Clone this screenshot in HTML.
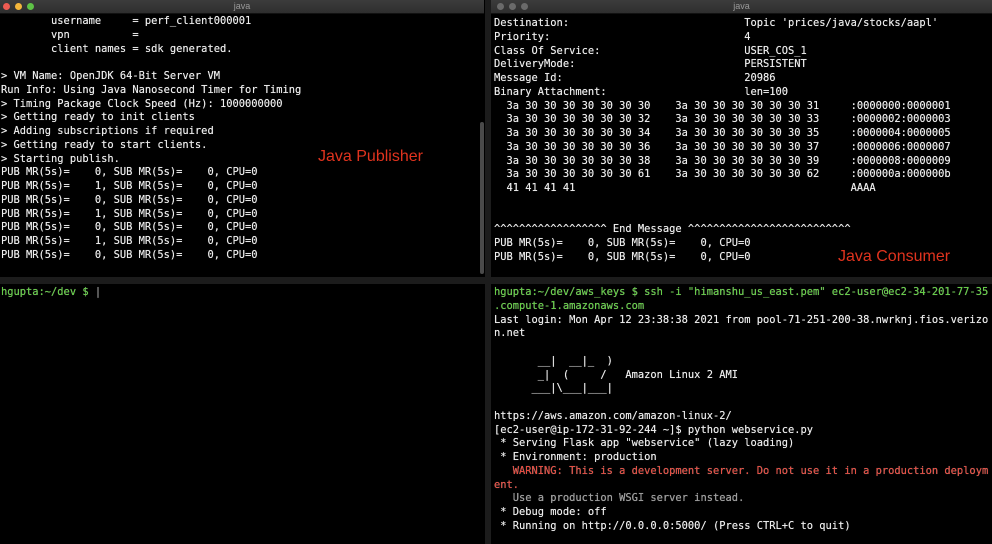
<!DOCTYPE html>
<html><head><style>
body{margin:0;width:992px;height:544px;background:#000;overflow:hidden;position:relative;font-family:"Liberation Mono",monospace}
.tb{position:absolute;top:0;height:13px;background:linear-gradient(#3c3c3c,#2e2e2e);border-bottom:1px solid #111;color:#9a9a9a;font:9px "Liberation Sans",sans-serif;text-align:center;line-height:13px}
.d{position:absolute;top:3px;width:7px;height:7px;border-radius:50%}
pre{position:absolute;margin:0;font-size:10.4px;line-height:13.75px;color:#ececec;white-space:pre;text-shadow:0 0 0.4px #ddd}
.g{color:#5fcf3f}.r{color:#e8463a}.gr{color:#9a9a9a}
.lbl{position:absolute;font:16px "Liberation Sans",sans-serif;color:#e0331e}
</style></head><body>
<div class="tb" style="left:0;width:484px">java</div>
<div class="d" style="left:3px;background:#ee5b52"></div>
<div class="d" style="left:15px;background:#f3b63b"></div>
<div class="d" style="left:27px;background:#5ec246"></div>
<div class="tb" style="left:491px;width:501px">java</div>
<div class="d" style="left:497px;background:#6a6a6a"></div>
<div class="d" style="left:509px;background:#6a6a6a"></div>
<div class="d" style="left:521px;background:#6a6a6a"></div>
<div style="position:absolute;left:485px;top:0;width:6px;height:544px;background:#1c1c1c"></div>
<div style="position:absolute;left:0;top:277px;width:992px;height:7px;background:#1c1c1c"></div>
<div style="position:absolute;left:480px;top:122px;width:4px;height:152px;background:#4a4a4a;border-radius:2px"></div>
<pre style="left:1px;top:15px">        username     = perf_client000001
        vpn          =
        client names = sdk generated.

&gt; VM Name: OpenJDK 64-Bit Server VM
Run Info: Using Java Nanosecond Timer for Timing
&gt; Timing Package Clock Speed (Hz): 1000000000
&gt; Getting ready to init clients
&gt; Adding subscriptions if required
&gt; Getting ready to start clients.
&gt; Starting publish.
PUB MR(5s)=    0, SUB MR(5s)=    0, CPU=0
PUB MR(5s)=    1, SUB MR(5s)=    0, CPU=0
PUB MR(5s)=    0, SUB MR(5s)=    0, CPU=0
PUB MR(5s)=    1, SUB MR(5s)=    0, CPU=0
PUB MR(5s)=    0, SUB MR(5s)=    0, CPU=0
PUB MR(5s)=    1, SUB MR(5s)=    0, CPU=0
PUB MR(5s)=    0, SUB MR(5s)=    0, CPU=0</pre>
<div class="lbl" style="left:318px;top:148px">Java Publisher</div>
<pre style="left:494px;top:17px">Destination:                            Topic 'prices/java/stocks/aapl'
Priority:                               4
Class Of Service:                       USER_COS_1
DeliveryMode:                           PERSISTENT
Message Id:                             20986
Binary Attachment:                      len=100
  3a 30 30 30 30 30 30 30    3a 30 30 30 30 30 30 31     :0000000:0000001
  3a 30 30 30 30 30 30 32    3a 30 30 30 30 30 30 33     :0000002:0000003
  3a 30 30 30 30 30 30 34    3a 30 30 30 30 30 30 35     :0000004:0000005
  3a 30 30 30 30 30 30 36    3a 30 30 30 30 30 30 37     :0000006:0000007
  3a 30 30 30 30 30 30 38    3a 30 30 30 30 30 30 39     :0000008:0000009
  3a 30 30 30 30 30 30 61    3a 30 30 30 30 30 30 62     :000000a:000000b
  41 41 41 41                                            AAAA


^^^^^^^^^^^^^^^^^^ End Message ^^^^^^^^^^^^^^^^^^^^^^^^^^
PUB MR(5s)=    0, SUB MR(5s)=    0, CPU=0
PUB MR(5s)=    0, SUB MR(5s)=    0, CPU=0</pre>
<div class="lbl" style="left:838px;top:248px">Java Consumer</div>
<pre style="left:1px;top:286px"><span class="g">hgupta:~/dev $</span> <span class="gr">|</span></pre>
<pre style="left:494px;top:286px"><span class="g">hgupta:~/dev/aws_keys $ ssh -i "himanshu_us_east.pem" ec2-user@ec2-34-201-77-35
.compute-1.amazonaws.com</span>
Last login: Mon Apr 12 23:38:38 2021 from pool-71-251-200-38.nwrknj.fios.verizo
n.net

       __|  __|_  )
       _|  (     /   Amazon Linux 2 AMI
      ___|\___|___|

https://aws.amazon.com/amazon-linux-2/
[ec2-user@ip-172-31-92-244 ~]$ python webservice.py
 * Serving Flask app "webservice" (lazy loading)
 * Environment: production
<span class="r">   WARNING: This is a development server. Do not use it in a production deploym
ent.</span>
<span class="gr">   Use a production WSGI server instead.</span>
 * Debug mode: off
 * Running on http://0.0.0.0:5000/ (Press CTRL+C to quit)</pre>
</body></html>
